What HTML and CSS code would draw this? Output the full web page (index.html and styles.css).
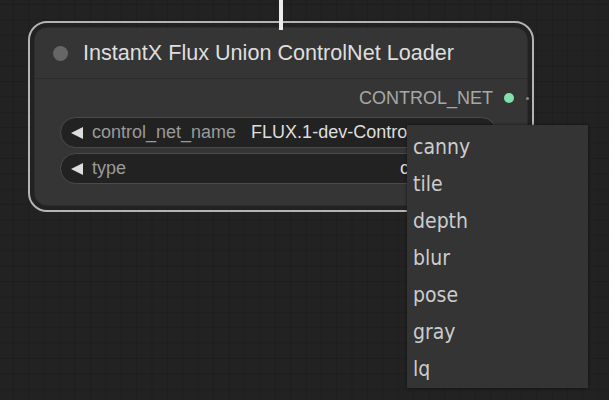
FILE: index.html
```html
<!DOCTYPE html>
<html>
<head>
<meta charset="utf-8">
<link rel="stylesheet" href="styles.css">
</head>
<body>
<div class="canvas">
  <div class="wire"></div>
  <div class="node-wrap">
    <div class="node">
      <div class="title">
        <span class="title-dot"></span>
        <span class="title-text">InstantX Flux Union ControlNet Loader</span>
      </div>
      <div class="outputs">
        <span class="out-label">CONTROL_NET</span>
        <span class="out-dot"></span>
      </div>
      <div class="widgets">
        <div class="widget">
          <span class="arrow-left"></span>
          <span class="w-label">control_net_name</span>
          <span class="w-value first">FLUX.1-dev-ControlNet-Union.safetensors</span>
          <span class="arrow-right"></span>
        </div>
        <div class="widget">
          <span class="arrow-left"></span>
          <span class="w-label">type</span>
          <span class="w-value second">canny</span>
          <span class="arrow-right"></span>
        </div>
      </div>
    </div>
  </div>
  <div class="menu">
    <div class="item">canny</div>
    <div class="item">tile</div>
    <div class="item">depth</div>
    <div class="item">blur</div>
    <div class="item">pose</div>
    <div class="item">gray</div>
    <div class="item">lq</div>
  </div>
</div>
</body>
</html>
```
FILE: styles.css
```css
html, body {
  margin: 0;
  padding: 0;
}
body {
  width: 609px;
  height: 400px;
  overflow: hidden;
  background-color: #222222;
  font-family: "Liberation Sans", Arial, sans-serif;
}
.canvas {
  position: relative;
  width: 609px;
  height: 400px;
  background-color: #222222;
  background-image:
    linear-gradient(to right, rgba(0,0,0,0.12) 1px, transparent 1px),
    linear-gradient(to bottom, rgba(0,0,0,0.12) 1px, transparent 1px);
  background-size: 15.4px 15.4px;
  background-position: 13px 4px;
}
.wire {
  position: absolute;
  left: 279px;
  top: 0;
  width: 4px;
  height: 30px;
  background: #ececec;
  z-index: 2;
}
.node-wrap {
  position: absolute;
  left: 28px;
  top: 21px;
  width: 492px;
  height: 177px;
  padding: 5px;
  border: 2px solid #b4b4b4;
  border-radius: 19px;
  z-index: 1;
}
.node {
  height: 100%;
  background: #353535;
  border-radius: 12px;
  display: flex;
  flex-direction: column;
  box-shadow: 0 0 0 1px #2c2c2c;
  position: relative;
  z-index: 3;
}
.title {
  height: 51px;
  display: flex;
  align-items: center;
  padding-left: 18px;
  border-bottom: 1px solid #2c2c2c;
  box-sizing: border-box;
  flex: none;
}
.title-dot {
  width: 15px;
  height: 15px;
  border-radius: 50%;
  background: #666666;
  flex: none;
}
.title-text {
  margin-left: 15px;
  font-size: 21.6px;
  color: #dedede;
  white-space: nowrap;
}
.outputs {
  height: 38px;
  display: flex;
  align-items: center;
  justify-content: flex-end;
  padding-right: 13px;
  position: relative;
  flex: none;
}
.outputs::after {
  content: "";
  position: absolute;
  right: -2px;
  top: 18px;
  width: 3px;
  height: 3px;
  border-radius: 50%;
  background: #8a8a8a;
}
.out-label {
  font-size: 18px;
  color: #a8a8a8;
}
.out-dot {
  width: 10px;
  height: 10px;
  border-radius: 50%;
  background: #7fe2ad;
  margin-left: 11px;
}
.widgets {
  display: flex;
  flex-direction: column;
  gap: 5px;
  margin: 0 30px 0 25px;
}
.widget {
  height: 31px;
  box-sizing: border-box;
  background: #222222;
  border: 1.5px solid #4b4b4b;
  border-radius: 16px;
  display: flex;
  align-items: center;
  padding-left: 10px;
  padding-right: 10px;
  font-size: 18px;
  white-space: nowrap;
  overflow: hidden;
}
.arrow-left {
  width: 0;
  height: 0;
  border-top: 6px solid transparent;
  border-bottom: 6px solid transparent;
  border-right: 12px solid #dddddd;
  flex: none;
}
.arrow-right {
  width: 0;
  height: 0;
  border-top: 6px solid transparent;
  border-bottom: 6px solid transparent;
  border-left: 12px solid #dddddd;
  flex: none;
  margin-left: auto;
}
.w-label {
  margin-left: 9px;
  color: #9a9a9a;
  flex: none;
}
.w-value {
  color: #dedede;
  overflow: hidden;
  text-overflow: ellipsis;
}
.w-value.first {
  margin-left: 15px;
  flex: 1 1 auto;
  min-width: 0;
}
.w-value.second {
  margin-left: auto;
  margin-right: 26px;
}
.w-value.second + .arrow-right {
  margin-left: 0;
}
.menu {
  position: absolute;
  left: 407px;
  top: 125px;
  width: 181px;
  height: 263px;
  box-sizing: border-box;
  padding-top: 4px;
  background: #343434;
  box-shadow: 0 0 3px rgba(0,0,0,0.6);
  z-index: 10;
}
.item {
  height: 37px;
  line-height: 37px;
  padding-left: 6px;
  font-family: "DejaVu Sans Condensed", "DejaVu Sans", sans-serif;
  font-stretch: condensed;
  font-size: 21px;
  color: #cccccc;
}
```
